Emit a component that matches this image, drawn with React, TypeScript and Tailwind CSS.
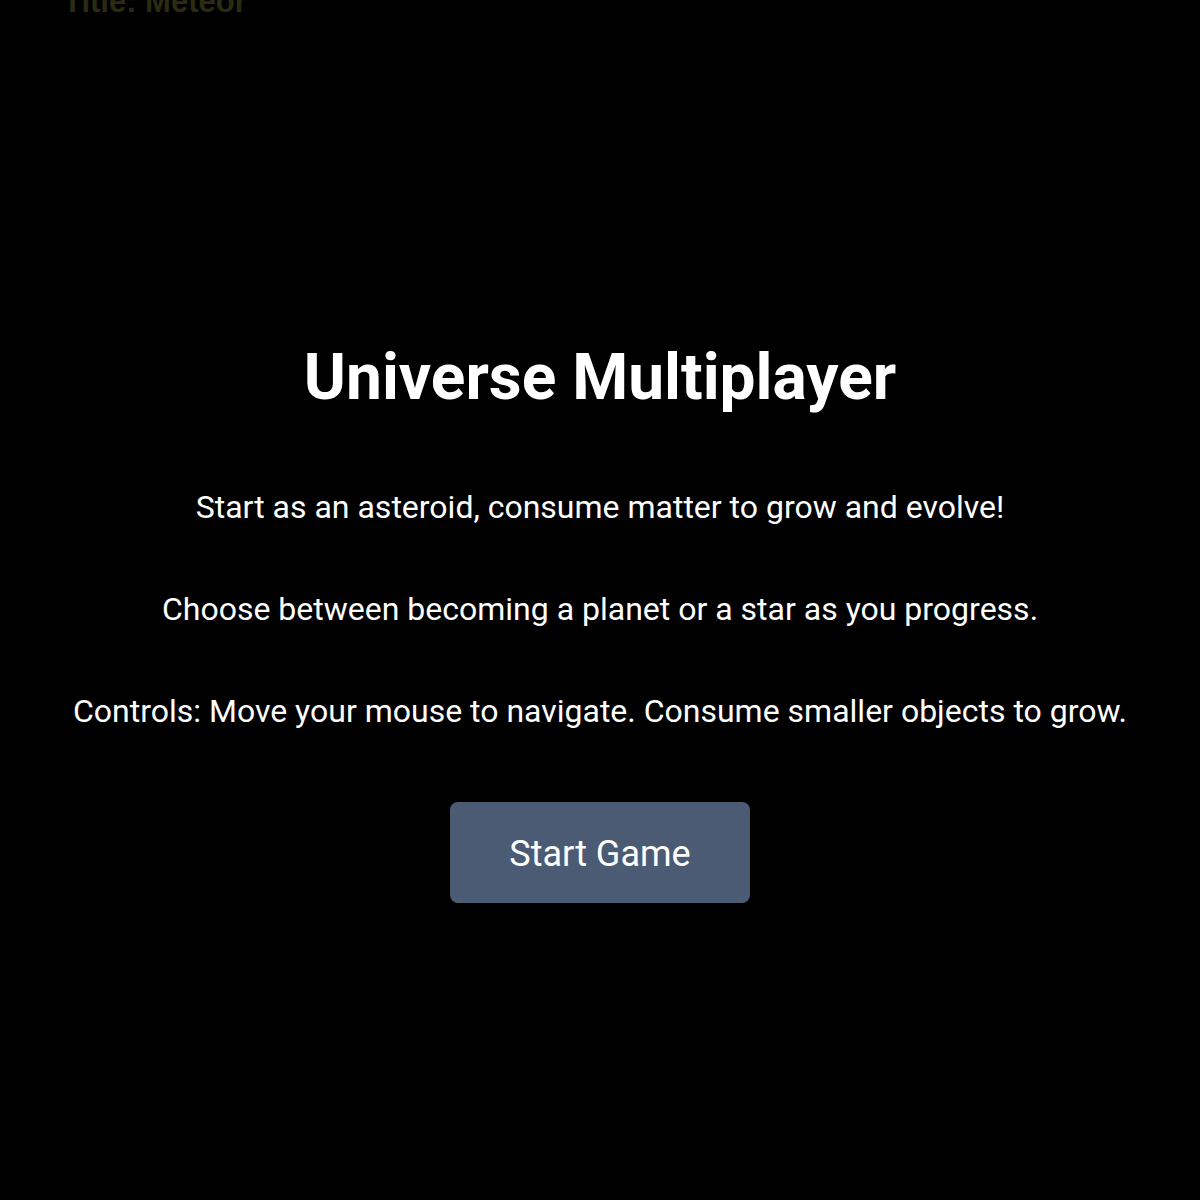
import React from 'react';

const App: React.FC = () => {
  return (
    <div className="relative w-full h-[1200px] bg-black overflow-hidden font-['Roboto',sans-serif] text-white">
      {/* faint HUD label peeking in at the top edge */}
      <div className="absolute left-[63px] top-[-14px] font-['Liberation_Sans',Arial,sans-serif] font-bold text-[31px] leading-none text-[#2b2b12] whitespace-nowrap">
        Title: Meteor
      </div>
      <div className="flex flex-col items-center justify-center h-full text-center pt-[49px]">
        <h1 className="text-[64px] font-bold leading-none mb-[77px]">Universe Multiplayer</h1>
        <p className="text-[32px] leading-[40px] mb-[62px]">Start as an asteroid, consume matter to grow and evolve!</p>
        <p className="text-[32px] leading-[40px] mb-[62px]">Choose between becoming a planet or a star as you progress.</p>
        <p className="text-[32px] leading-[40px] mb-[71px]">
          Controls: Move your mouse to navigate. Consume smaller objects to grow.
        </p>
        <button className="w-[300px] h-[101px] pt-[3px] rounded-lg bg-[#4a5b73] text-[36px]">Start Game</button>
      </div>
    </div>
  );
};

export default App;
